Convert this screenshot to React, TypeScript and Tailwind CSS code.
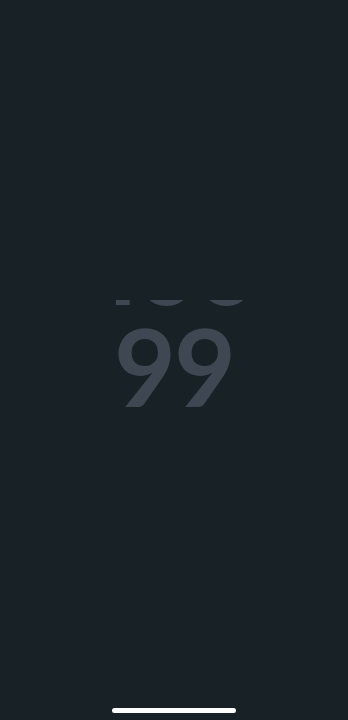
export default function App() {
  return (
    <div className="relative flex h-[720px] w-full flex-col items-center bg-[#182125] pt-[300px]">
      {/* rolling counter window */}
      <div className="h-[120px] w-full overflow-hidden">
        <div className="-mt-[86px] flex flex-col items-center font-['Lato',sans-serif] text-[107px] font-bold leading-[100px] tracking-[-2px] text-[#3e4752]">
          <span>
            <span className="font-['Inter',sans-serif] font-semibold">1</span>00
          </span>
          <span>99</span>
        </div>
      </div>
      <div className="absolute bottom-[7px] left-1/2 h-[5px] w-[124px] -translate-x-1/2 rounded-full bg-white" />
    </div>
  );
}
